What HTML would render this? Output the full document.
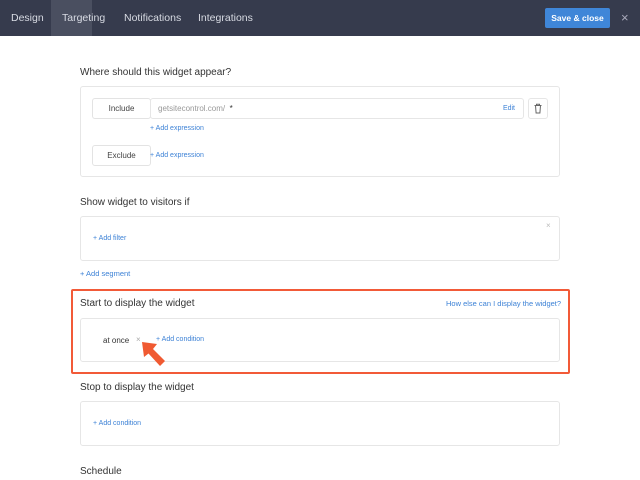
<!DOCTYPE html>
<html><head><style>
*{box-sizing:border-box;margin:0;padding:0}
body{width:640px;height:480px;overflow:hidden;background:#fff;font-family:"Liberation Sans",sans-serif;position:relative;color:#333}
.a{position:absolute}
.hd{left:0;top:0;width:640px;height:36px;background:#363b4d}
.tab{top:0;height:36px;line-height:36px;font-size:10.5px;color:#d8dbe3}
.h{font-size:10px;color:#333}
.box{border:1px solid #e6e6e6;border-radius:3px;background:#fff}
.lnk{font-size:7px;color:#3d82d6}
.btn{border:1px solid #e3e3e3;border-radius:3px;font-size:8px;color:#444;text-align:center;line-height:19px;background:#fff}
</style></head><body>
<div class="a hd"></div>
<div class="a" style="left:51px;top:0;width:41px;height:36px;background:#4a4f60"></div>
<div class="a tab" style="left:11px">Design</div>
<div class="a tab" style="left:62px">Targeting</div>
<div class="a tab" style="left:124px">Notifications</div>
<div class="a tab" style="left:198px">Integrations</div>
<div class="a" style="left:545px;top:8px;width:65px;height:20px;background:#3f86d8;border-radius:2px;color:#fff;font-size:8.5px;line-height:20px;text-align:center;font-weight:bold">Save &amp; close</div>
<div class="a" style="left:621px;top:10px;color:#aab;font-size:13px">×</div>

<div class="a h" style="left:80px;top:67px">Where should this widget appear?</div>
<div class="a box" style="left:80px;top:86px;width:480px;height:91px"></div>
<div class="a btn" style="left:92px;top:98px;width:59px;height:21px">Include</div>
<div class="a box" style="left:150px;top:98px;width:374px;height:21px;font-size:8px;color:#999;line-height:19px;padding-left:7px">getsitecontrol.com/ &nbsp;<span style="color:#333">*</span><span style="position:absolute;right:8px;color:#3d82d6;font-size:7px">Edit</span></div>
<div class="a box" style="left:528px;top:98px;width:20px;height:21px"></div>
<svg class="a" style="left:533px;top:103px" width="10" height="11" viewBox="0 0 10 11"><path d="M1.5 2.5h7M3.5 2.5V1.3h3v1.2M2.5 2.5l.6 7.5h3.8l.6-7.5" fill="none" stroke="#666" stroke-width="1"/></svg>
<div class="a lnk" style="left:150px;top:125px">+ Add expression</div>
<div class="a btn" style="left:92px;top:145px;width:59px;height:21px">Exclude</div>
<div class="a lnk" style="left:150px;top:152px">+ Add expression</div>

<div class="a h" style="left:80px;top:197px">Show widget to visitors if</div>
<div class="a box" style="left:80px;top:216px;width:480px;height:45px"></div>
<div class="a lnk" style="left:93px;top:235px">+ Add filter</div>
<div class="a" style="left:546px;top:221px;color:#bbb;font-size:8px">×</div>
<div class="a lnk" style="left:80px;top:269px;font-size:7.5px">+ Add segment</div>

<div class="a" style="left:71px;top:289px;width:499px;height:85px;border:2px solid #f25a38;border-radius:2px"></div>
<div class="a h" style="left:80px;top:298px">Start to display the widget</div>
<div class="a lnk" style="left:446px;top:299px;font-size:7.5px">How else can I display the widget?</div>
<div class="a box" style="left:80px;top:318px;width:480px;height:44px"></div>
<div class="a" style="left:103px;top:336px;font-size:8px;color:#333">at once</div>
<div class="a" style="left:136px;top:335px;font-size:8px;color:#aaa">×</div>
<div class="a lnk" style="left:156px;top:336px">+ Add condition</div>
<svg class="a" style="left:140px;top:340px" width="30" height="30" viewBox="0 0 30 30"><path d="M2 2L17 4L13 9L25 21L20 26L8.5 13.5L4 17Z" fill="#f05a32"/></svg>

<div class="a h" style="left:80px;top:382px">Stop to display the widget</div>
<div class="a box" style="left:80px;top:401px;width:480px;height:45px"></div>
<div class="a lnk" style="left:93px;top:420px">+ Add condition</div>
<div class="a h" style="left:80px;top:466px">Schedule</div>
</body></html>
